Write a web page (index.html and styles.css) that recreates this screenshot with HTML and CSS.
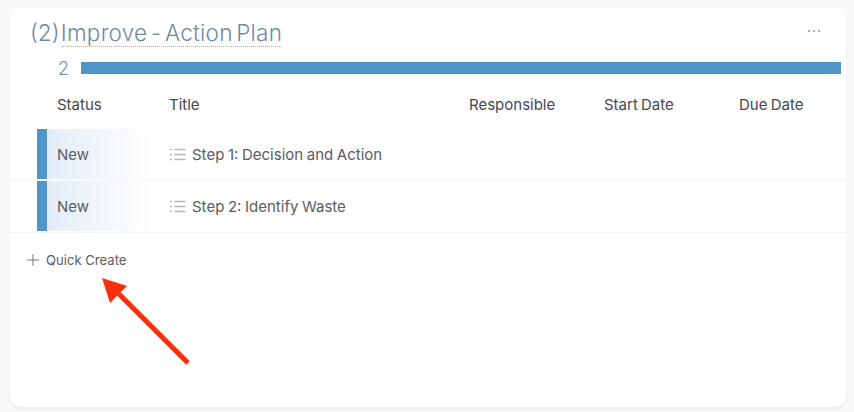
FILE: index.html
```html
<!DOCTYPE html>
<html lang="en">
<head>
<meta charset="utf-8">
<title>Improve - Action Plan</title>
<link rel="stylesheet" href="styles.css">
</head>
<body>
<main class="card">
  <header class="head">
    <h1 class="title"><span class="count">(2)</span> <span class="name">Improve - Action Plan</span></h1>
    <svg class="more" width="14" height="4" viewBox="0 0 14 4"><circle cx="2" cy="2" r="1.1"/><circle cx="7" cy="2" r="1.1"/><circle cx="12" cy="2" r="1.1"/></svg>
  </header>
  <div class="progress"><span class="num">2</span><div class="bar"></div></div>
  <div class="cols">
    <span class="c-status">Status</span><span class="c-title">Title</span><span class="c-resp">Responsible</span><span class="c-start">Start Date</span><span class="c-due">Due Date</span>
  </div>
  <div class="row">
    <div class="status">New</div>
    <svg class="list" width="16" height="13" viewBox="0 0 16 13"><path d="M0 1.5h2M0 6.5h2M0 11.5h2M4.500 1.500h11M4.500 6.500h11M4.500 11.500h11"/></svg>
    <span class="step">Step 1: Decision and Action</span>
  </div>
  <div class="row">
    <div class="status">New</div>
    <svg class="list" width="16" height="13" viewBox="0 0 16 13"><path d="M0 1.5h2M0 6.5h2M0 11.5h2M4.500 1.500h11M4.500 6.500h11M4.500 11.500h11"/></svg>
    <span class="step">Step 2: Identify Waste</span>
  </div>
  <div class="quick">
    <svg class="plus" width="12" height="12" viewBox="0 0 12 12"><path d="M6 0v12M0 6h12"/></svg>
    <span>Quick Create</span>
  </div>
  <svg class="arrow" width="90" height="90" viewBox="0 0 90 90"><path class="shaft" d="M87 86 L18 17"/><path class="tip" d="M1 1 L26 9 L9 26 Z"/></svg>
</main>
</body>
</html>
```
FILE: styles.css
```css
html, body { margin: 0; height: 100%; }
body {
  background: #f8f9fb;
  padding: 7px 8px 5px 10px;
  box-sizing: border-box;
  font-family: "Inter", "Liberation Sans", sans-serif;
  overflow: hidden;
}
.card {
  position: relative;
  height: 400px;
  background: #fff;
  border-radius: 10px;
  box-shadow: 0 2px 3px rgba(0,0,0,0.06);
  display: flex;
  flex-direction: column;
  color: #44474d;
}
.head {
  display: flex;
  justify-content: space-between;
  align-items: flex-start;
  padding: 11px 25px 0 20px;
  height: 40px;
  box-sizing: content-box;
}
.title {
  margin: 0;
  font-size: 22.500px;
  line-height: 29px;
  font-weight: 300;
  color: #7089a3;
  word-spacing: -3px;
}
.count { margin-right: -2px; }
.name {
  border-bottom: 1px dotted #a9b0b8;
  letter-spacing: 0.25px;
}
.more { margin-top: 11px; fill: #9a9da3; }
.progress {
  display: flex;
  align-items: center;
  height: 12px;
  padding: 0 5px 0 48px;
  margin-top: 4px;
}
.num { width: 23px; font-size: 18px; font-weight: 300; color: #5f8fb4; }
.bar { flex: 1; height: 12px; background: #4f95c9; }
.cols {
  display: flex;
  height: 55px;
  align-items: center;
  padding: 6px 0 0 47px;
  font-size: 15px;
  color: #45484d;
  word-spacing: -1px;
  box-sizing: border-box;
}
.c-status { width: 112px; }
.c-title { width: 300px; }
.c-resp { width: 135px; }
.c-start { width: 135px; }
.row {
  display: flex;
  align-items: center;
  height: 52px;
  border-bottom: 1px solid #f3f4f6;
  box-sizing: border-box;
  font-size: 15px;
  color: #5a5d63;
  position: relative;
}
.row .status {
  align-self: stretch;
  margin: 0 0 1px 27px;
  width: 120px;
  border-left: 10px solid #4f95c9;
  padding-left: 10px;
  box-sizing: border-box;
  display: flex;
  align-items: center;
  background: linear-gradient(90deg, #e2ecf6 0%, #ffffff 95%);
}
.list {
  margin-left: 13px;
  margin-right: 6px;
  fill: none;
  stroke: #b4b6ba;
  stroke-width: 1.300;
}
.step { word-spacing: -0.6px; }
.quick {
  display: flex;
  align-items: center;
  gap: 7px;
  margin: 19px 0 0 17px;
  font-size: 13.100px;
  color: #5a5d63;
  height: 16px;
}
.plus { stroke: #75787d; stroke-width: 1; fill: none; }
.arrow {
  position: absolute;
  left: 91px;
  top: 270px;
}
.shaft { stroke: #f5300f; stroke-width: 5; fill: none; }
.tip { fill: #f5300f; }
```
